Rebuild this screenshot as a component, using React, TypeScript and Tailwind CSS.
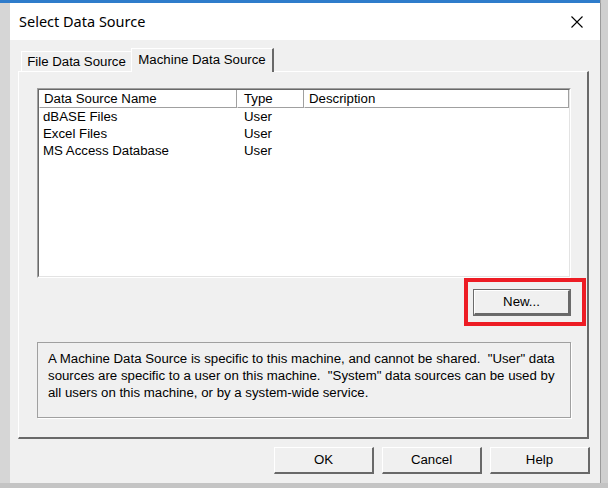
import clsx from "clsx";

const ROWS = [
  { name: "dBASE Files", type: "User" },
  { name: "Excel Files", type: "User" },
  { name: "MS Access Database", type: "User" },
];

const SANS = "font-['Liberation_Sans',Arial,sans-serif]";

/** Classic raised 3D push button. */
function PushButton({ label, isDefault = false }: { label: string; isDefault?: boolean }) {
  return (
    <button
      type="button"
      className={clsx(
        "h-[27px] bg-[#f0f0f0]",
        isDefault ? "w-[98px] h-[26px] border border-[#6b6b6b]" : "w-[100px]",
      )}
    >
      <span className="flex h-full w-full items-center justify-center border-t border-l border-t-white border-l-white border-r-2 border-b-2 border-r-[#696969] border-b-[#696969] text-[13.25px] text-black">
        {label}
      </span>
    </button>
  );
}

function ListHeader() {
  const cols = [
    { label: "Data Source Name", w: "w-[198px]", pl: "pl-[4px]" },
    { label: "Type", w: "w-[67px]", pl: "pl-[6px]" },
    { label: "Description", w: "w-[265px]", pl: "pl-[4px]" },
  ];
  return (
    <div className="flex h-[18px] bg-white">
      {cols.map((c) => (
        <div
          key={c.label}
          className={clsx(
            c.w,
            c.pl,
            "flex items-center border-l border-l-white border-r border-r-[#a0a0a0] border-b border-b-[#a0a0a0] text-[13.25px] text-black",
          )}
        >
          {c.label}
        </div>
      ))}
    </div>
  );
}

export default function App() {
  return (
    <div className={clsx("relative h-[488px] w-[608px] overflow-hidden bg-[#d6d6d6]", SANS)}>
      {/* window behind the dialog */}
      <div className="h-[3px] w-[600px] bg-[#2f7ccb]" />
      <div className="absolute top-0 right-0 h-full w-[8px] border-l border-l-[#a8a8a8] bg-[#cfcfcf]" />
      <div className="absolute bottom-0 left-0 h-[5px] w-full bg-[#c4c4c4]" />

      <div className="relative ml-[10px] h-[480px] w-[590px] bg-[#f0f0f0] shadow-[1px_0_0_#9a9a9a]">
        {/* title bar */}
        <div className="flex h-[37px] items-center justify-between bg-white pl-[9px] pr-[17px]">
          <span className="font-['Segoe_UI','Noto_Sans',sans-serif] text-[14.5px] text-black">
            Select Data Source
          </span>
          <svg width="12" height="12" viewBox="0 0 12 12" className="text-black">
            <path d="M0.5 0.5 L11.5 11.5 M11.5 0.5 L0.5 11.5" stroke="currentColor" strokeWidth="1.1" />
          </svg>
        </div>

        {/* tabs */}
        <div className="flex h-[31px] items-end pl-[11px]">
          <div className="flex h-[20px] w-[110px] items-center justify-center border-t border-l border-white text-[13.25px] text-black">
            File Data Source
          </div>
          <div className="relative z-10 -mb-px flex h-[24px] w-[143px] items-center justify-center border-t border-l border-white border-r-2 border-r-[#696969] bg-[#f0f0f0] pb-[2px] text-[13.25px] text-black">
            Machine Data Source
          </div>
        </div>

        {/* tab page */}
        <div className="ml-[8px] h-[368px] w-[571px] border-t border-l border-white border-r-2 border-b-2 border-r-[#696969] border-b-[#696969] pt-[16px] pl-[18px]">
          {/* list view */}
          <div className="h-[190px] w-[534px] border-t border-l border-t-[#a0a0a0] border-l-[#a0a0a0] border-r border-b border-r-white border-b-white">
            <div className="h-full w-full border-t border-l border-t-[#696969] border-l-[#696969] border-r border-b border-r-[#e3e3e3] border-b-[#e3e3e3] bg-white">
              <ListHeader />
              {ROWS.map((r) => (
                <div key={r.name} className="flex h-[17px] items-center text-[13.25px] text-black">
                  <span className="w-[198px] pl-[4px]">{r.name}</span>
                  <span className="pl-[7px]">{r.type}</span>
                </div>
              ))}
            </div>
          </div>

          {/* New... with annotation frame */}
          <div className="flex w-[549px] justify-end">
            <div className="border-4 border-[#ed1c24] pt-[7px] pr-[11px] pb-[6px] pl-[5px]">
              <PushButton label="New..." isDefault />
            </div>
          </div>

          {/* explanation */}
          <div className="mt-[16px] h-[76px] w-[534px] border border-[#a0a0a0] pt-[7px] pl-[10px] text-[13.25px] leading-[17px] text-black shadow-[1px_1px_0_#ffffff]">
            <div className="whitespace-pre">
              A Machine Data Source is specific to this machine, and cannot be shared.  "User" data
            </div>
            <div className="whitespace-pre">
              sources are specific to a user on this machine.  "System" data sources can be used by
            </div>
            <div className="whitespace-pre">all users on this machine, or by a system-wide service.</div>
          </div>
        </div>

        {/* dialog buttons */}
        <div className="mt-[8px] flex justify-end gap-[8px] pr-[10px]">
          <PushButton label="OK" />
          <PushButton label="Cancel" />
          <PushButton label="Help" />
        </div>
      </div>
    </div>
  );
}
